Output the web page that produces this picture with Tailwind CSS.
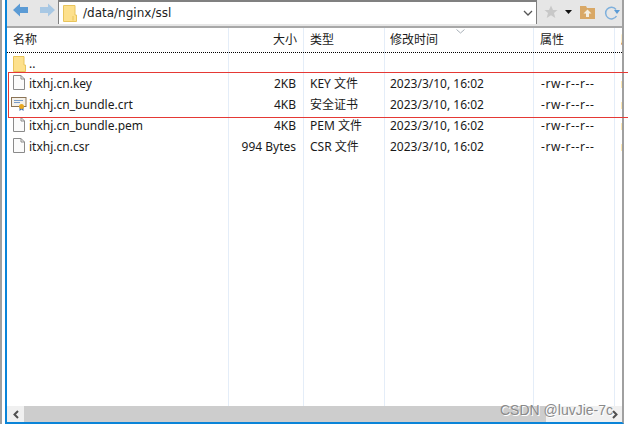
<!DOCTYPE html>
<html lang="en">
  <head>
    <meta charset="UTF-8" />
    <title>SFTP</title>
    <script src="https://cdn.jsdelivr.net/npm/@tailwindcss/browser@4"></script>
  </head>
  <body class="bg-white overflow-hidden">
    <div class="relative w-[628px] h-[425px] flex pr-[4px] pb-[1px] text-[12px] leading-[21px] text-[#1a1a1a] font-['Noto_Sans','Noto_Sans_CJK_SC',sans-serif]">
      <div class="w-[2px] bg-[#a0a0a0] mr-[3px]"></div>
      <div class="flex-1 flex flex-col min-w-0 border-l-2 border-l-[#0a84d8] border-b-2 border-b-[#0a84d8] border-r-2 border-r-[#a0a0a0]">
        <!-- toolbar -->
        <div class="h-[28px] shrink-0 bg-[#e6e6e6] border-b-2 border-b-[#a8a8a8] flex items-start">
          <div class="w-[51px] shrink-0 h-full flex items-center pl-[6px] gap-[10px] pb-[6px]">
            <svg width="16" height="14" viewBox="0 0 16 14"><path d="M0 7 7 0.5V4H15V10H7V13.5Z" fill="#5b9bd5"/></svg>
            <svg width="16" height="14" viewBox="0 0 16 14"><path d="M16 7 9 0.5V4H1V10H9V13.5Z" fill="#a8c8e4"/></svg>
          </div>
          <div class="w-[479px] shrink-0 h-[24px] bg-white border-t-2 border-t-[#808080] border-l border-l-[#808080] border-r border-r-[#808080] flex items-center">
            <svg class="ml-[4px] mr-[6px]" width="14" height="17" viewBox="0 0 14 17"><path d="M.5.5H12V10H13.5V16.500H.5Z" fill="#fde08c" stroke="#e8c45c"/><path d="M10 11V15.500" stroke="#e8c45c"/></svg>
            <span class="text-[#222] text-[12px] font-['DejaVu_Sans'] pt-[1px]">/data/nginx/ssl</span>
            <svg class="ml-auto mr-[3px]" width="10" height="7" viewBox="0 0 10 7"><path d="M1 1 5 5 9 1" fill="none" stroke="#555" stroke-width="1.300"/></svg>
          </div>
          <div class="flex-1 flex items-center h-[24px] pl-[7px]">
            <svg width="14" height="14" viewBox="0 0 14 14"><path d="M7 .5 9 5H13.500L10 8 11.300 13 7 10.300 2.700 13 4 8 .5 5H5Z" fill="#c8c8c8"/></svg>
            <svg class="ml-[7px]" width="7" height="4" viewBox="0 0 7 4"><path d="M0 0H7L3.500 4Z" fill="#111"/></svg>
            <svg class="ml-[8px]" width="15" height="13" viewBox="0 0 15 13"><path d="M0 0H6L7 2H15V13H0Z" fill="#d9a866"/><path d="M7.500 3.500 11.500 7.500H9V11H6V7.500H3.500Z" fill="#f5efe2"/></svg>
            <svg class="ml-[9px]" width="16" height="15" viewBox="0 0 16 15"><path d="M12 4.500A5.800 5.800 0 1 0 12.500 11" fill="none" stroke="#7fb0dc" stroke-width="1.500"/><path d="M10 5H16L13 9Z" fill="#5b9bd5"/></svg>
          </div>
        </div>
        <!-- file list -->
        <div class="flex-1 min-h-0 relative flex flex-col bg-white">
          <div class="absolute inset-x-0 top-0 bottom-[16px] pointer-events-none grid grid-cols-[222px_75px_81px_149px_81px_1fr]">
            <div class="border-r border-r-[#e4edf8]"></div>
            <div class="border-r border-r-[#e4edf8]"></div>
            <div class="border-r border-r-[#e4edf8]"></div>
            <div class="border-r border-r-[#e4edf8]"></div>
            <div class="border-r border-r-[#e4edf8]"></div>
          </div>
          <div class="relative h-[25px] shrink-0 pb-[2px] grid grid-cols-[222px_75px_81px_149px_81px_1fr] items-center border-b border-dotted border-b-black overflow-hidden">
            <div class="pl-[6px]">名称</div>
            <div class="text-right pr-[7px]">大小</div>
            <div class="pl-[6px]">类型</div>
            <div class="pl-[5px]">修改时间</div>
            <div class="pl-[6px]">属性</div>
            <div class="pl-[6px]">所</div>
            <svg class="absolute left-[449px] top-[1px]" width="9" height="5" viewBox="0 0 9 5"><path d="M.5.5 4.500 4 8.500.5" fill="none" stroke="#a8b0b8"/></svg>
          </div>
          <div class="relative h-[18px] shrink-0 grid grid-cols-[222px_1fr] items-center">
            <div class="flex items-center pl-[6px]">
              <svg class="mr-[3px]" width="13" height="16" viewBox="0 0 13 16"><path d="M.5.5H11V9H12.500V15.500H.5Z" fill="#fde08c" stroke="#e8c45c"/></svg>
              <span>..</span>
            </div>
          </div>
          <div class="relative h-[21px] shrink-0 grid grid-cols-[222px_75px_81px_149px_81px_1fr] items-center whitespace-nowrap overflow-hidden">
            <div class="flex items-center pl-[6px]">
              <svg class="mr-[4px]" width="12" height="15" viewBox="0 0 12 15"><path d="M.5.5H8L11.500 4V14.500H.5Z" fill="#fbfbfb" stroke="#8a8a8a"/><path d="M8 .5V4H11.500" fill="none" stroke="#8a8a8a"/></svg>
              <span class="pt-[2px]">itxhj.cn.key</span>
            </div>
            <div class="text-right pr-[8px] pt-[2px]">2KB</div>
            <div class="pl-[6px] pt-[2px]">KEY 文件</div>
            <div class="pl-[5px] pt-[2px]">2023/3/10, 16:02</div>
            <div class="pl-[7px] pt-[2px] tracking-[0.6px]">-rw-r--r--</div>
            <div class="pl-[6px] pt-[2px]">r</div>
          </div>
          <div class="relative h-[21px] shrink-0 grid grid-cols-[222px_75px_81px_149px_81px_1fr] items-center whitespace-nowrap overflow-hidden">
            <div class="flex items-center pl-[4px]">
              <svg class="mr-[2px]" width="16" height="15" viewBox="0 0 16 15"><rect x=".5" y="1.500" width="14.500" height="9" fill="#f4f1ea" stroke="#8b7355"/><path d="M3 4.500H12M3 6.500H9" stroke="#7a9cc8"/><path d="M8.500 10 8.500 15 10.500 13.500 12.500 15 12.500 10Z" fill="#3f6fb0"/><circle cx="10.500" cy="10.500" r="2.500" fill="#e8a820"/></svg>
              <span class="pt-[2px]">itxhj.cn_bundle.crt</span>
            </div>
            <div class="text-right pr-[8px] pt-[2px]">4KB</div>
            <div class="pl-[6px] pt-[2px]">安全证书</div>
            <div class="pl-[5px] pt-[2px]">2023/3/10, 16:02</div>
            <div class="pl-[7px] pt-[2px] tracking-[0.6px]">-rw-r--r--</div>
            <div class="pl-[6px] pt-[2px]">r</div>
          </div>
          <div class="relative h-[21px] shrink-0 grid grid-cols-[222px_75px_81px_149px_81px_1fr] items-center whitespace-nowrap overflow-hidden">
            <div class="flex items-center pl-[6px]">
              <svg class="mr-[4px]" width="12" height="15" viewBox="0 0 12 15"><path d="M.5.5H8L11.500 4V14.500H.5Z" fill="#fbfbfb" stroke="#8a8a8a"/><path d="M8 .5V4H11.500" fill="none" stroke="#8a8a8a"/></svg>
              <span class="pt-[2px]">itxhj.cn_bundle.pem</span>
            </div>
            <div class="text-right pr-[8px] pt-[2px]">4KB</div>
            <div class="pl-[6px] pt-[2px]">PEM 文件</div>
            <div class="pl-[5px] pt-[2px]">2023/3/10, 16:02</div>
            <div class="pl-[7px] pt-[2px] tracking-[0.6px]">-rw-r--r--</div>
            <div class="pl-[6px] pt-[2px]">r</div>
          </div>
          <div class="relative h-[21px] shrink-0 grid grid-cols-[222px_75px_81px_149px_81px_1fr] items-center whitespace-nowrap overflow-hidden">
            <div class="flex items-center pl-[6px]">
              <svg class="mr-[4px]" width="12" height="15" viewBox="0 0 12 15"><path d="M.5.5H8L11.500 4V14.500H.5Z" fill="#fbfbfb" stroke="#8a8a8a"/><path d="M8 .5V4H11.500" fill="none" stroke="#8a8a8a"/></svg>
              <span class="pt-[2px]">itxhj.cn.csr</span>
            </div>
            <div class="text-right pr-[8px] pt-[2px]">994 Bytes</div>
            <div class="pl-[6px] pt-[2px]">CSR 文件</div>
            <div class="pl-[5px] pt-[2px]">2023/3/10, 16:02</div>
            <div class="pl-[7px] pt-[2px] tracking-[0.6px]">-rw-r--r--</div>
            <div class="pl-[6px] pt-[2px]">r</div>
          </div>
          <!-- scrollbar -->
          <div class="relative mt-auto h-[16px] shrink-0 bg-[#f0f0f0] flex items-stretch">
            <div class="w-[17px] flex items-center justify-center"><svg width="6" height="9" viewBox="0 0 6 9"><path d="M5 1 1.500 4.500 5 8" fill="none" stroke="#505050" stroke-width="2"/></svg></div>
            <div class="w-[522px] bg-[#cdcdcd]"></div>
            <div class="ml-auto w-[14px] flex items-center justify-center"><svg width="6" height="9" viewBox="0 0 6 9"><path d="M1 1 4.500 4.500 1 8" fill="none" stroke="#505050" stroke-width="2"/></svg></div>
          </div>
        </div>
      </div>
      <!-- annotation and watermark overlays -->
      <div class="absolute left-[8px] right-0 top-[72px] h-[46px] border border-r-0 border-[#e53935]"></div>
      <div class="absolute left-[500px] top-[400px] text-[14px] text-[#8a8a8a] [text-shadow:1px_1px_0_#fff] font-['Liberation_Sans']">CSDN @luvJie-7c</div>
    </div>
  </body>
</html>
